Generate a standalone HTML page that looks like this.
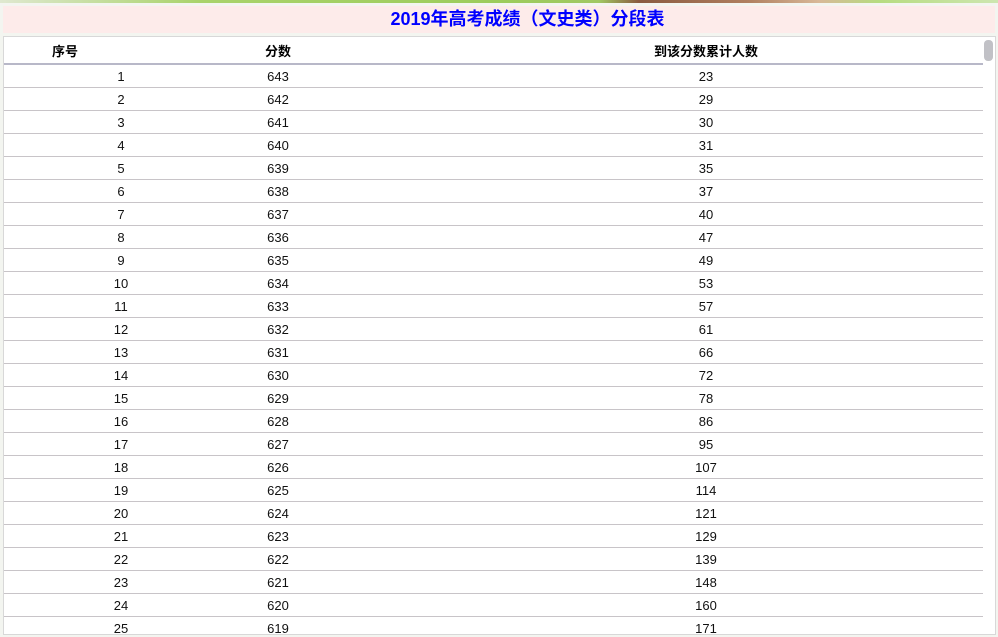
<!DOCTYPE html>
<html><head><meta charset="utf-8"><style>
*{margin:0;padding:0;box-sizing:border-box}
body{width:998px;height:637px;overflow:hidden;background:#f3f5f0;font-family:"Liberation Sans","Noto Sans CJK SC",sans-serif;position:relative}
.top{position:absolute;left:0;top:0;width:998px;height:3px;background:linear-gradient(90deg,#dfe8d0 0%,#a9d36b 20%,#9ccc5c 50%,#a0c862 60%,#8a5a40 64%,#b08060 75%,#d8b898 82%,#b6dc80 88%,#cde6b0 100%)}
.title{position:absolute;left:3px;top:6px;width:992px;height:27px;background:#fdebea;color:#0000ff;font-weight:bold;font-size:18px;line-height:27px;text-align:center;padding-left:57px}
.panel{position:absolute;left:3px;top:36px;width:993px;height:599px;background:#fff;border:1px solid #d8d8d8;overflow:hidden}
.hd{position:absolute;top:0;left:0;width:979px;height:28px;border-bottom:2px solid #b8b8c8;font-weight:bold;font-size:13px}
.row{position:absolute;left:0;width:979px;height:23px;border-bottom:1px solid #c8c4c8;font-size:13px;color:#111}
.c{position:absolute;width:100px;text-align:center;line-height:24px}
.hd .c{line-height:29px}
.sb{position:absolute;left:980px;top:3px;width:9px;height:21px;background:#c1c1c6;border-radius:4px}
</style></head><body>
<div class="top"></div>
<div class="title">2019年高考成绩（文史类）分段表</div>
<div class="panel">
<div class="hd"><div class="c" style="left:11px">序号</div><div class="c" style="left:224px">分数</div><div class="c" style="width:200px;left:602px">到该分数累计人数</div></div>
<div class="sb"></div>
</div>
<div class="panel" style="background:none;border:none;top:37px;left:4px;height:597px">
<div class="row" style="top:28px"><div class="c" style="left:67px">1</div><div class="c" style="left:224px">643</div><div class="c" style="left:652px">23</div></div>
<div class="row" style="top:51px"><div class="c" style="left:67px">2</div><div class="c" style="left:224px">642</div><div class="c" style="left:652px">29</div></div>
<div class="row" style="top:74px"><div class="c" style="left:67px">3</div><div class="c" style="left:224px">641</div><div class="c" style="left:652px">30</div></div>
<div class="row" style="top:97px"><div class="c" style="left:67px">4</div><div class="c" style="left:224px">640</div><div class="c" style="left:652px">31</div></div>
<div class="row" style="top:120px"><div class="c" style="left:67px">5</div><div class="c" style="left:224px">639</div><div class="c" style="left:652px">35</div></div>
<div class="row" style="top:143px"><div class="c" style="left:67px">6</div><div class="c" style="left:224px">638</div><div class="c" style="left:652px">37</div></div>
<div class="row" style="top:166px"><div class="c" style="left:67px">7</div><div class="c" style="left:224px">637</div><div class="c" style="left:652px">40</div></div>
<div class="row" style="top:189px"><div class="c" style="left:67px">8</div><div class="c" style="left:224px">636</div><div class="c" style="left:652px">47</div></div>
<div class="row" style="top:212px"><div class="c" style="left:67px">9</div><div class="c" style="left:224px">635</div><div class="c" style="left:652px">49</div></div>
<div class="row" style="top:235px"><div class="c" style="left:67px">10</div><div class="c" style="left:224px">634</div><div class="c" style="left:652px">53</div></div>
<div class="row" style="top:258px"><div class="c" style="left:67px">11</div><div class="c" style="left:224px">633</div><div class="c" style="left:652px">57</div></div>
<div class="row" style="top:281px"><div class="c" style="left:67px">12</div><div class="c" style="left:224px">632</div><div class="c" style="left:652px">61</div></div>
<div class="row" style="top:304px"><div class="c" style="left:67px">13</div><div class="c" style="left:224px">631</div><div class="c" style="left:652px">66</div></div>
<div class="row" style="top:327px"><div class="c" style="left:67px">14</div><div class="c" style="left:224px">630</div><div class="c" style="left:652px">72</div></div>
<div class="row" style="top:350px"><div class="c" style="left:67px">15</div><div class="c" style="left:224px">629</div><div class="c" style="left:652px">78</div></div>
<div class="row" style="top:373px"><div class="c" style="left:67px">16</div><div class="c" style="left:224px">628</div><div class="c" style="left:652px">86</div></div>
<div class="row" style="top:396px"><div class="c" style="left:67px">17</div><div class="c" style="left:224px">627</div><div class="c" style="left:652px">95</div></div>
<div class="row" style="top:419px"><div class="c" style="left:67px">18</div><div class="c" style="left:224px">626</div><div class="c" style="left:652px">107</div></div>
<div class="row" style="top:442px"><div class="c" style="left:67px">19</div><div class="c" style="left:224px">625</div><div class="c" style="left:652px">114</div></div>
<div class="row" style="top:465px"><div class="c" style="left:67px">20</div><div class="c" style="left:224px">624</div><div class="c" style="left:652px">121</div></div>
<div class="row" style="top:488px"><div class="c" style="left:67px">21</div><div class="c" style="left:224px">623</div><div class="c" style="left:652px">129</div></div>
<div class="row" style="top:511px"><div class="c" style="left:67px">22</div><div class="c" style="left:224px">622</div><div class="c" style="left:652px">139</div></div>
<div class="row" style="top:534px"><div class="c" style="left:67px">23</div><div class="c" style="left:224px">621</div><div class="c" style="left:652px">148</div></div>
<div class="row" style="top:557px"><div class="c" style="left:67px">24</div><div class="c" style="left:224px">620</div><div class="c" style="left:652px">160</div></div>
<div class="row" style="top:580px"><div class="c" style="left:67px">25</div><div class="c" style="left:224px">619</div><div class="c" style="left:652px">171</div></div>
</div>
</body></html>
